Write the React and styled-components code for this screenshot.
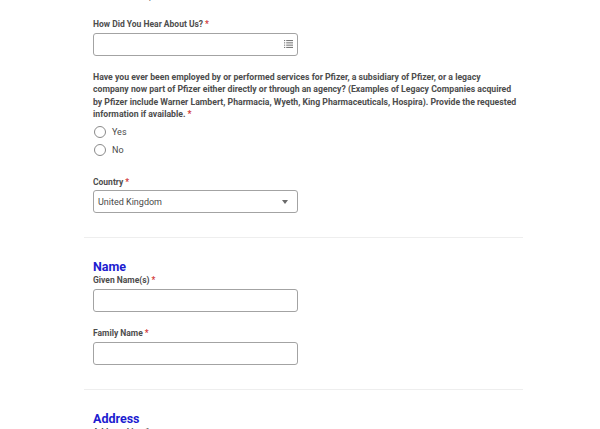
import styled, { createGlobalStyle } from "styled-components";

const GlobalStyle = createGlobalStyle`
  html, body {
    margin: 0;
    padding: 0;
    background: #fff;
  }
  body {
    font-family: Roboto, "Liberation Sans", sans-serif;
    color: #494949;
  }
`;

const Page = styled.div`
  width: 439px;
  margin: -8px 0 0 84px;
`;

const Section = styled.section`
  padding: 0 9px;
  border-bottom: ${({ last }) => (last ? "none" : "1px solid #eeeeee")};
  padding-bottom: ${({ last }) => (last ? "0" : "24px")};
  margin-bottom: ${({ last }) => (last ? "0" : "21px")};
`;

const Note = styled.div`
  font-size: 8px;
  line-height: 12px;
  color: #555;
  margin-bottom: 14px;
`;

const Heading = styled.h2`
  margin: 0;
  font-size: 12.5px;
  line-height: 15px;
  font-weight: 700;
  color: #1c1cd0;
`;

const Field = styled.div`
  margin-bottom: ${({ gap }) => gap ?? 18}px;
`;

const Label = styled.div`
  font-size: ${({ long }) => (long ? 8.7 : 8.5)}px;
  line-height: 12.4px;
  font-weight: 700;
  color: #4d4d4d;
  margin: 0 ${({ long }) => (long ? -2.5 : 0)}px 2.5px 0;
`;

const Star = styled.span`
  color: #d23a3a;
  margin-left: 2px;
`;

const Box = styled.div`
  box-sizing: border-box;
  width: 205px;
  height: 23px;
  border: 1px solid #a3a3a3;
  border-radius: 3px;
  display: flex;
  align-items: center;
  justify-content: space-between;
  padding: 0 4px 0 4px;
  font-size: 9px;
  color: #4a4a4a;
`;

const Options = styled.div`
  display: flex;
  flex-direction: column;
  gap: 6px;
  margin-top: 5px;
`;

const Option = styled.label`
  display: flex;
  align-items: center;
  gap: 6px;
  font-size: 9px;
  line-height: 12px;
  color: #4a4a4a;
`;

const Radio = styled.span`
  box-sizing: border-box;
  width: 12px;
  height: 12px;
  border-radius: 50%;
  border: 1px solid #8a8a8a;
  margin-left: 1px;
`;

const ListIcon = () => (
  <svg width="9" height="8" viewBox="0 0 9 8">
    <g fill="#7a7a7a">
      <rect x="0" y="0" width="1.2" height="1.1" />
      <rect x="2.2" y="0" width="6.8" height="1.1" />
      <rect x="0" y="2.3" width="1.2" height="1.1" />
      <rect x="2.2" y="2.3" width="6.8" height="1.1" />
      <rect x="0" y="4.6" width="1.2" height="1.1" />
      <rect x="2.2" y="4.6" width="6.8" height="1.1" />
      <rect x="0" y="6.9" width="1.2" height="1.1" />
      <rect x="2.2" y="6.9" width="6.8" height="1.1" />
    </g>
  </svg>
);

const Caret = () => (
  <svg width="6" height="4" viewBox="0 0 6 4" style={{ marginRight: 5 }}>
    <path d="M0 0 L6 0 L3 4 Z" fill="#6a6a6a" />
  </svg>
);

export default function App() {
  return (
    <>
      <GlobalStyle />
      <Page>
        <Section>
          <Note>
            <Star style={{ marginLeft: 0 }}>*</Star> Indicates a required field
          </Note>
          <Field gap={15}>
            <Label>
              How Did You Hear About Us?<Star>*</Star>
            </Label>
            <Box>
              <span />
              <ListIcon />
            </Box>
          </Field>
          <Field gap={20}>
            <Label long>
              Have you ever been employed by or performed services for Pfizer, a
              subsidiary of Pfizer, or a legacy company now part of Pfizer either
              directly or through an agency? (Examples of Legacy Companies
              acquired by Pfizer include Warner Lambert, Pharmacia, Wyeth, King
              Pharmaceuticals, Hospira). Provide the requested information if
              available.<Star>*</Star>
            </Label>
            <Options>
              <Option>
                <Radio />
                Yes
              </Option>
              <Option>
                <Radio />
                No
              </Option>
            </Options>
          </Field>
          <Field gap={0}>
            <Label>
              Country<Star>*</Star>
            </Label>
            <Box>
              <span>United Kingdom</span>
              <Caret />
            </Box>
          </Field>
        </Section>
        <Section>
          <Heading>Name</Heading>
          <Field gap={15}>
            <Label>
              Given Name(s)<Star>*</Star>
            </Label>
            <Box />
          </Field>
          <Field gap={0}>
            <Label>
              Family Name<Star>*</Star>
            </Label>
            <Box />
          </Field>
        </Section>
        <Section last>
          <Heading>Address</Heading>
          <Label>Address Line 1</Label>
        </Section>
      </Page>
    </>
  );
}
